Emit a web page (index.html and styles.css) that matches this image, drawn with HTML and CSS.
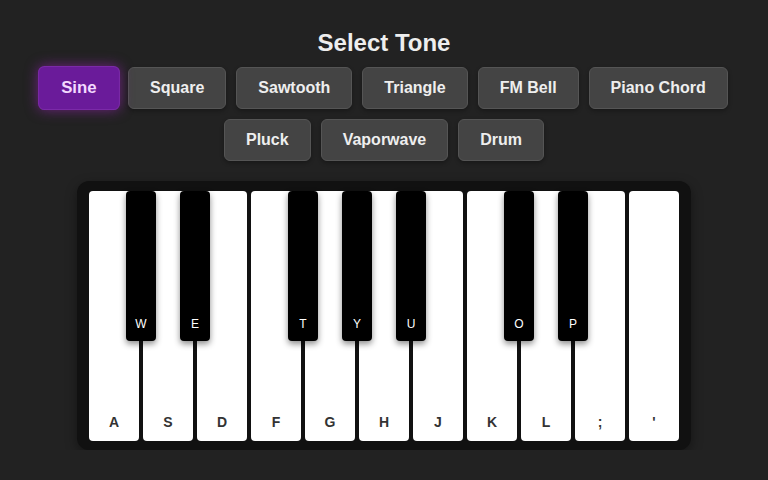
FILE: index.html
```html
<!DOCTYPE html>
<html lang="en">
<head>
<meta charset="UTF-8" />
<meta name="viewport" content="width=device-width, initial-scale=1.0" />
<title>Synth Piano</title>
<link rel="stylesheet" href="styles.css">
</head>
<body>
  <h2 class="title">Select Tone</h2>
  <div class="tones">
    <button class="tone active">Sine</button>
    <button class="tone">Square</button>
    <button class="tone">Sawtooth</button>
    <button class="tone">Triangle</button>
    <button class="tone">FM Bell</button>
    <button class="tone">Piano Chord</button>
    <button class="tone">Pluck</button>
    <button class="tone">Vaporwave</button>
    <button class="tone">Drum</button>
  </div>

  <div class="piano">
    <div class="white">A<div class="black">W</div></div>
    <div class="white">S<div class="black">E</div></div>
    <div class="white">D</div>
    <div class="white">F<div class="black">T</div></div>
    <div class="white">G<div class="black">Y</div></div>
    <div class="white">H<div class="black">U</div></div>
    <div class="white">J</div>
    <div class="white">K<div class="black">O</div></div>
    <div class="white">L<div class="black">P</div></div>
    <div class="white">;</div>
    <div class="white">'</div>
  </div>
</body>
</html>
```

FILE: styles.css
```css
* { box-sizing: border-box; }
body {
  font-family: "Liberation Sans", Arial, sans-serif;
  background: #222;
  color: #eee;
  margin: 0;
  padding-top: 29px;
  display: flex;
  flex-direction: column;
  align-items: center;
}
.title {
  font-size: 24px;
  line-height: 28px;
  margin: 0 0 10px;
  color: #eee;
}
/* Tone buttons */
.tones {
  width: 100%;
  padding: 0 20px;
  display: flex;
  flex-wrap: wrap;
  justify-content: center;
  gap: 10px;
}
.tone {
  font-family: inherit;
  font-size: 16px;
  font-weight: bold;
  line-height: 18px;
  padding: 11px 21px;
  color: #eee;
  background: #444;
  border: 1px solid #555;
  border-radius: 6px;
  box-shadow: 0 2px 4px rgba(0,0,0,0.3);
  cursor: pointer;
}
.tone.active {
  background: #6a1b9a;
  border-color: #7b2aa8;
  color: #f3d9ff;
  transform: scale(1.05);
  box-shadow: 0 0 12px rgba(142, 36, 170, 0.7);
}
/* Piano */
.piano {
  margin-top: 20px;
  background: #111;
  padding: 10px 10px 9px;
  border-radius: 12px;
  display: flex;
  box-shadow: 0 4px 12px rgba(0,0,0,0.4);
}
.white {
  position: relative;
  width: 50px;
  height: 250px;
  margin: 0 2px;
  background: #fff;
  border-radius: 4px;
  color: #333;
  font-size: 14px;
  font-weight: bold;
  line-height: 16px;
  display: flex;
  align-items: flex-end;
  justify-content: center;
  padding-bottom: 11px;
}
.black {
  position: absolute;
  top: 0;
  right: -17px;
  width: 30px;
  height: 150px;
  background: #000;
  border-radius: 4px;
  box-shadow: 0 3px 6px rgba(0,0,0,0.45);
  color: #fff;
  font-size: 12px;
  font-weight: normal;
  line-height: 14px;
  display: flex;
  align-items: flex-end;
  justify-content: center;
  padding-bottom: 10px;
  z-index: 2;
}
```
